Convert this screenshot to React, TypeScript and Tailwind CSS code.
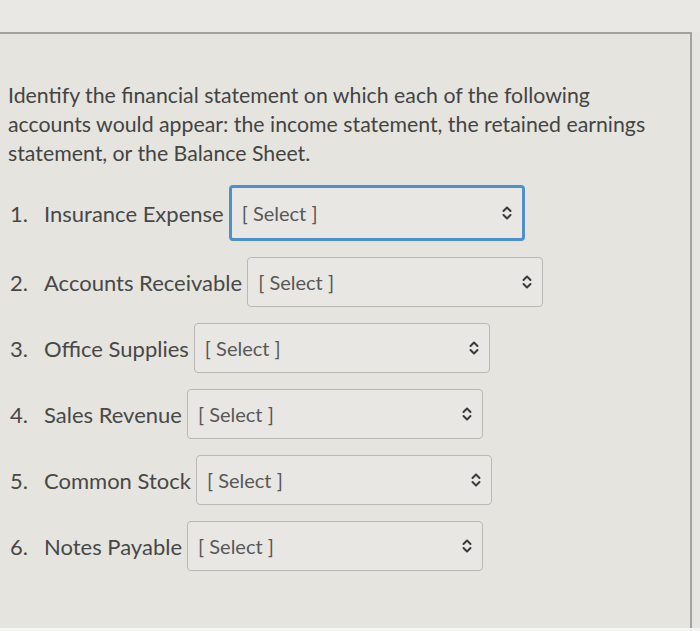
import React from "react";

const items = [
  "Insurance Expense",
  "Accounts Receivable",
  "Office Supplies",
  "Sales Revenue",
  "Common Stock",
  "Notes Payable",
];

function Chevrons() {
  return (
    <svg width="12" height="16" viewBox="0 0 12 16" fill="none" stroke="#3a3a3a" strokeWidth="2" strokeLinecap="round" strokeLinejoin="round">
      <path d="M2.5 6 L6 2.5 L9.5 6" />
      <path d="M2.5 10 L6 13.5 L9.5 10" />
    </svg>
  );
}

function SelectBox({ focused }: { focused?: boolean }) {
  return (
    <div
      className={
        "ml-[5px] flex w-[296px] items-center justify-between rounded-[4px] bg-[#e8e7e3] pl-[10px] pr-[9px] " +
        (focused
          ? "h-[56px] border-[3px] border-[#4f8fcc]"
          : "h-[50px] border border-[#b9b8b4]")
      }
    >
      <span className="text-[20px] leading-none text-[#585858]">[ Select ]</span>
      <Chevrons />
    </div>
  );
}

export default function App() {
  return (
    <div
      className="flex h-[631px] w-[700px] flex-col overflow-hidden bg-[#e6e5e1]"
      style={{ fontFamily: "Lato, 'Open Sans', sans-serif" }}
    >
      <div className="h-[32px] shrink-0 bg-[#e9e8e4]" />
      <div className="mr-[8px] flex-1 border-r-2 border-t-2 border-[#a3a29f] bg-[#e5e4df]">
        <p className="mt-[47px] whitespace-nowrap pl-[8px] text-[21.3px] leading-[29px] text-[#444444]">
          Identify the financial statement on which each of the following
          <br />
          accounts would appear: the income statement, the retained earnings
          <br />
          statement, or the Balance Sheet.
        </p>
        <ol className="mt-[17px] flex flex-col gap-[16px] pl-[10px]">
          {items.map((label, i) => (
            <li key={label} className="flex items-center text-[22px] text-[#484848]">
              <span className="w-[34px] shrink-0">{i + 1}.</span>
              <span>{label}</span>
              <SelectBox focused={i === 0} />
            </li>
          ))}
        </ol>
      </div>
      <div className="h-[3px] shrink-0 bg-[#f4f4f2]" />
    </div>
  );
}
